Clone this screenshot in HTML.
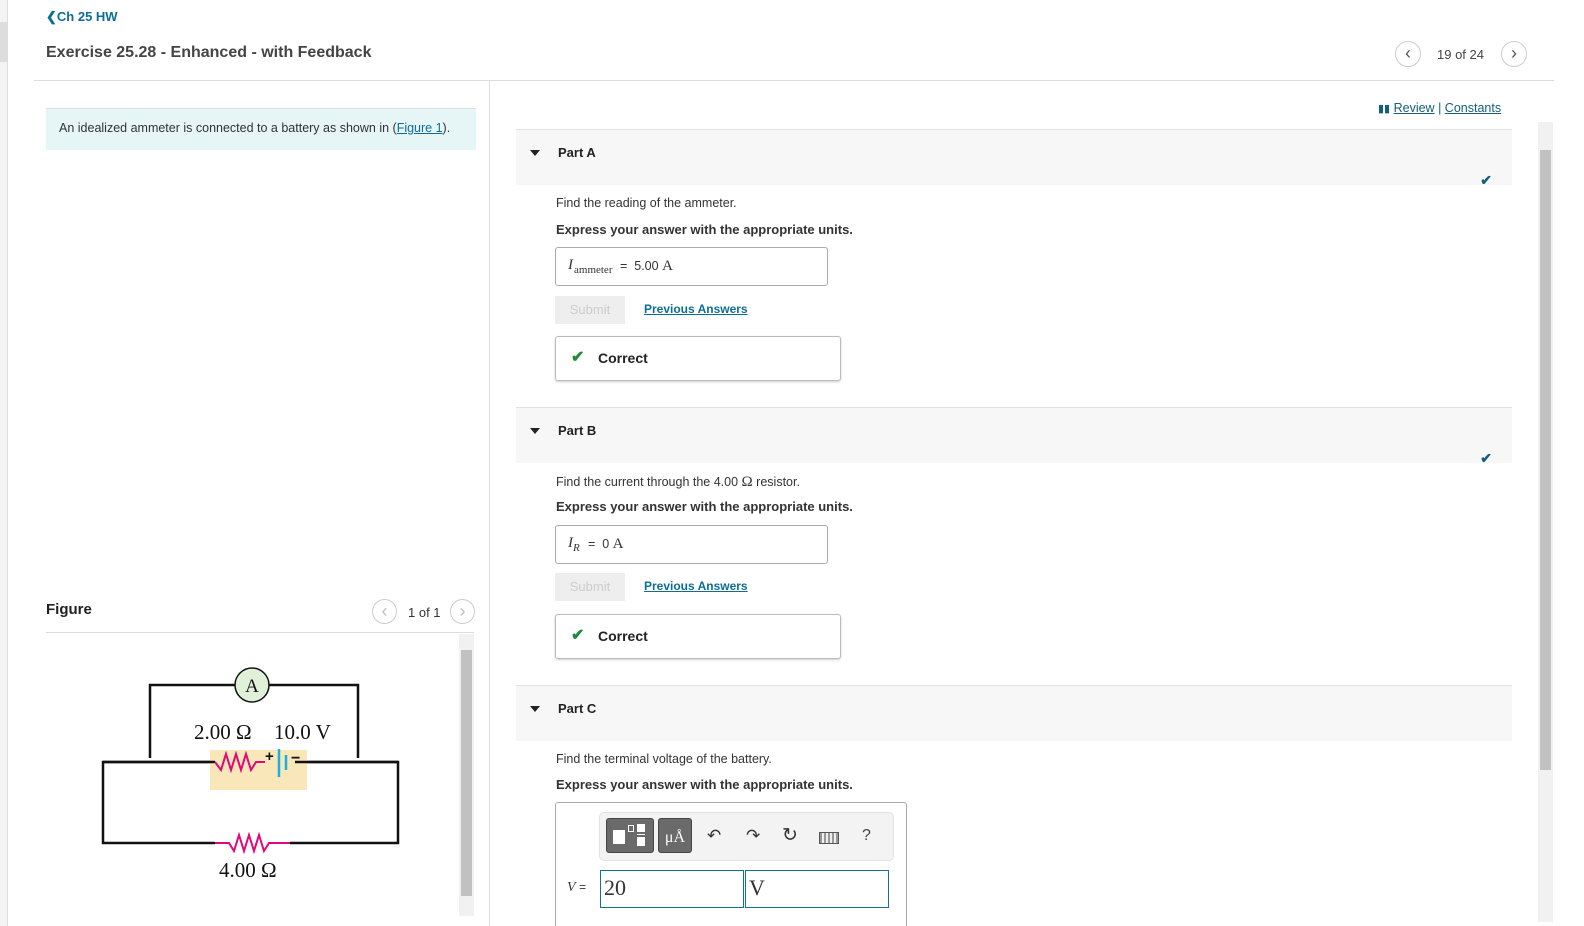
<!DOCTYPE html>
<html style="overflow:hidden;width:1584px;height:926px"><head><meta charset="utf-8"><style>
*{margin:0;padding:0;box-sizing:border-box}
body{width:1584px;height:926px;overflow:hidden;background:#fff;font-family:"Liberation Sans",Arial,sans-serif;color:#333;position:relative}
.a{position:absolute}
.serif{font-family:"Liberation Serif",serif}
.circ{position:absolute;border:1px solid #ccc;border-radius:50%;width:26px;height:26px;text-align:center;line-height:23px;color:#555;font-size:18px}
.part{position:absolute;left:516px;width:996px;height:56px;background:#f7f7f7;border-top:1px solid #e2e2e2}
.part .tri{position:absolute;left:14px;top:20px;width:0;height:0;border-left:5px solid transparent;border-right:5px solid transparent;border-top:6px solid #222}
.part .lbl{position:absolute;left:42px;top:15px;font-size:13px;font-weight:bold;color:#222}
.part .ck{position:absolute;right:20px;top:42px;color:#14607a;font-size:14px;font-weight:bold}
.q{position:absolute;left:556px;font-size:12.5px;color:#333}
.qb{position:absolute;left:556px;font-size:13px;font-weight:bold;color:#333}
.ans{position:absolute;left:555px;width:273px;height:39px;border:1px solid #aaa;border-radius:3px}
.sub{position:absolute;left:555px;width:70px;height:28px;background:#eee;color:#ccc;font-size:13px;text-align:center;line-height:28px}
.prev{position:absolute;left:644px;font-size:12px;font-weight:bold;color:#0e6d95;text-decoration:underline}
.corr{position:absolute;left:555px;width:286px;height:45px;border:1px solid #bbb;border-radius:3px;box-shadow:0 1px 2px #ccc}
.corr span{position:absolute;left:42px;top:13px;font-weight:bold;font-size:14px;color:#222}
.corr b{position:absolute;left:15px;top:10px;color:#1e8a3a;font-size:16px}
</style></head><body>
<div class="a" style="left:0;top:0;width:8px;height:926px;background:#f3f3f3;border-right:1px solid #ddd"></div>
<div class="a" style="left:0;top:22px;width:8px;height:40px;background:#ddd"></div>
<div class="a" style="left:46px;top:9px;font-size:13px;font-weight:bold;color:#0e6d95">&#10094;Ch 25 HW</div>
<div class="a" style="left:46px;top:44px;font-size:16px;font-weight:bold;color:#444">Exercise 25.28 - Enhanced - with Feedback</div>
<div class="circ" style="left:1395px;top:41px">&#8249;</div>
<div class="a" style="left:1437px;top:47px;font-size:13px;color:#444">19 of 24</div>
<div class="circ" style="left:1501px;top:41px">&#8250;</div>
<div class="a" style="left:34px;top:80px;width:1520px;height:1px;background:#ddd"></div>
<div class="a" style="left:489px;top:81px;width:1px;height:845px;background:#ddd"></div>

<div class="a" style="left:46px;top:108px;width:430px;height:42px;background:#e6f5f5;border-top:1px solid #ddd"></div>
<div class="a" style="left:59px;top:121px;font-size:12.5px;color:#333">An idealized ammeter is connected to a battery as shown in (<span style="color:#0e6d95;text-decoration:underline">Figure 1</span>).</div>

<div class="a" style="left:46px;top:601px;font-size:15px;font-weight:bold;color:#222">Figure</div>
<div class="circ" style="left:372px;top:599px;width:25px;height:25px;color:#bbb">&#8249;</div>
<div class="a" style="left:408px;top:605px;font-size:13px;color:#333">1 of 1</div>
<div class="circ" style="left:450px;top:599px;width:25px;height:25px;color:#bbb">&#8250;</div>
<div class="a" style="left:46px;top:632px;width:428px;height:1px;background:#ddd"></div>
<div class="a" style="left:459px;top:634px;width:15px;height:282px;background:#f1f1f1"></div>
<div class="a" style="left:461px;top:650px;width:11px;height:246px;background:#c1c1c1"></div>
<svg class="a" style="left:90px;top:650px" width="370" height="270">
<rect x="120" y="100" width="97" height="40" fill="#f9e6b9"/>
<polyline points="60,108 60,35 268,35 268,108" fill="none" stroke="#111" stroke-width="2.5"/>
<rect x="13" y="112" width="295" height="81" fill="none" stroke="#111" stroke-width="2.5"/>
<rect x="120" y="106" width="97" height="10" fill="#f9e6b9"/>
<line x1="13" y1="112" x2="125" y2="112" stroke="#111" stroke-width="2.5"/>
<line x1="205" y1="112" x2="308" y2="112" stroke="#111" stroke-width="2.5"/>
<polyline points="125,112 131,120 136,104 141,120 146,104 151,120 156,104 161,120 166,112 175,112" fill="none" stroke="#e0087a" stroke-width="2"/>
<line x1="189" y1="99" x2="189" y2="127" stroke="#1ab0e0" stroke-width="2.5"/>
<line x1="196" y1="105" x2="196" y2="120" stroke="#1ab0e0" stroke-width="2.5"/>
<text x="175" y="111" font-family="Liberation Sans" font-size="15" font-weight="bold" fill="#111">+</text>
<text x="201" y="113" font-family="Liberation Sans" font-size="16" font-weight="bold" fill="#111">−</text>
<rect x="125" y="185" width="75" height="16" fill="#fff"/>
<polyline points="125,193 139,193 144,201 149,185 154,201 159,185 164,201 169,185 174,201 179,193 200,193" fill="none" stroke="#e0087a" stroke-width="2"/>
<circle cx="162" cy="35" r="17" fill="#e1f0d8" stroke="#111" stroke-width="1.5"/>
<text x="162" y="42" text-anchor="middle" font-family="Liberation Serif" font-size="19" fill="#111">A</text>
<text x="104" y="89" font-family="Liberation Serif" font-size="21" fill="#111">2.00 Ω</text>
<text x="184" y="89" font-family="Liberation Serif" font-size="21" fill="#111">10.0 V</text>
<text x="129" y="227" font-family="Liberation Serif" font-size="21" fill="#111">4.00 Ω</text>
</svg>

<div class="a" style="left:1378px;top:101px;font-size:12.5px;color:#14607a"><span style="font-size:11px">&#9646;&#9646;</span> <u>Review</u> | <u>Constants</u></div>
<div class="a" style="left:1538px;top:122px;width:15px;height:800px;background:#f1f1f1"></div>
<div class="a" style="left:1540px;top:150px;width:11px;height:620px;background:#c1c1c1"></div>

<div class="part" style="top:129px"><div class="tri"></div><div class="lbl">Part A</div><div class="ck">&#10004;</div></div>
<div class="q" style="top:196px">Find the reading of the ammeter.</div>
<div class="qb" style="top:222px">Express your answer with the appropriate units.</div>
<div class="ans" style="top:247px"><span class="serif a" style="left:12px;top:9px;font-size:15px;font-style:italic">I</span><span class="serif a" style="left:18px;top:16px;font-size:11px">ammeter</span><span class="a" style="left:64px;top:10px;font-size:12.5px">= &nbsp;5.00 <span class="serif" style="font-size:15px">A</span></span></div>
<div class="sub" style="top:296px">Submit</div>
<div class="prev" style="top:302px">Previous Answers</div>
<div class="corr" style="top:336px"><b>&#10004;</b><span>Correct</span></div>

<div class="part" style="top:407px"><div class="tri"></div><div class="lbl">Part B</div><div class="ck">&#10004;</div></div>
<div class="q" style="top:474px">Find the current through the 4.00 <span class="serif" style="font-size:15px">Ω</span> resistor.</div>
<div class="qb" style="top:499px">Express your answer with the appropriate units.</div>
<div class="ans" style="top:525px"><span class="serif a" style="left:12px;top:9px;font-size:15px;font-style:italic">I<sub style="font-size:11px">R</sub></span><span class="a" style="left:32px;top:10px;font-size:12.5px">= &nbsp;0 <span class="serif" style="font-size:15px">A</span></span></div>
<div class="sub" style="top:573px">Submit</div>
<div class="prev" style="top:579px">Previous Answers</div>
<div class="corr" style="top:614px"><b>&#10004;</b><span>Correct</span></div>

<div class="part" style="top:685px"><div class="tri"></div><div class="lbl">Part C</div></div>
<div class="q" style="top:752px">Find the terminal voltage of the battery.</div>
<div class="qb" style="top:777px">Express your answer with the appropriate units.</div>
<div class="a" style="left:555px;top:802px;width:352px;height:124px;border:1px solid #aaa;border-bottom:none;border-radius:3px 3px 0 0"></div>
<div class="a" style="left:599px;top:812px;width:295px;height:49px;background:#f3f3f3;border:1px solid #e2e2e2;border-radius:5px"></div>
<div class="a" style="left:606px;top:818px;width:48px;height:35px;background:#6a6a6a;border-radius:3px;border:1px solid #444"></div>
<div class="a" style="left:613px;top:830px;width:12px;height:14px;background:#fff"></div>
<div class="a" style="left:628px;top:825px;width:6px;height:7px;border:1px solid #fff"></div>
<div class="a" style="left:637px;top:824px;width:8px;height:8px;background:#fff"></div>
<div class="a" style="left:637px;top:834px;width:8px;height:1px;background:#fff"></div>
<div class="a" style="left:637px;top:837px;width:8px;height:9px;background:#fff"></div>
<div class="a serif" style="left:658px;top:818px;width:34px;height:35px;background:#6a6a6a;border-radius:3px;border:1px solid #444;color:#fff;font-size:16px;text-align:center;line-height:38px">μÅ</div>
<div class="a" style="left:707px;top:826px;font-size:17px;color:#333">&#8630;</div>
<div class="a" style="left:746px;top:826px;font-size:17px;color:#333">&#8631;</div>
<div class="a" style="left:782px;top:824px;font-size:19px;color:#333">&#8635;</div>
<div class="a" style="left:819px;top:832px;width:20px;height:12px;border:1px solid #555;background:repeating-linear-gradient(90deg,#999 0 2px,#eee 2px 4px)"></div>
<div class="a" style="left:862px;top:827px;font-size:16px;color:#444">?</div>
<div class="a serif" style="left:567px;top:880px;font-size:14px"><i>V</i> <span style="font-family:'Liberation Sans';font-size:12px">=</span></div>
<div class="a serif" style="left:600px;top:870px;width:144px;height:38px;border:1px solid #14738a;font-size:22px;padding:4px 3px">20</div>
<div class="a serif" style="left:745px;top:870px;width:144px;height:38px;border:1px solid #14738a;font-size:22px;padding:4px 3px">V</div>
</body></html>
